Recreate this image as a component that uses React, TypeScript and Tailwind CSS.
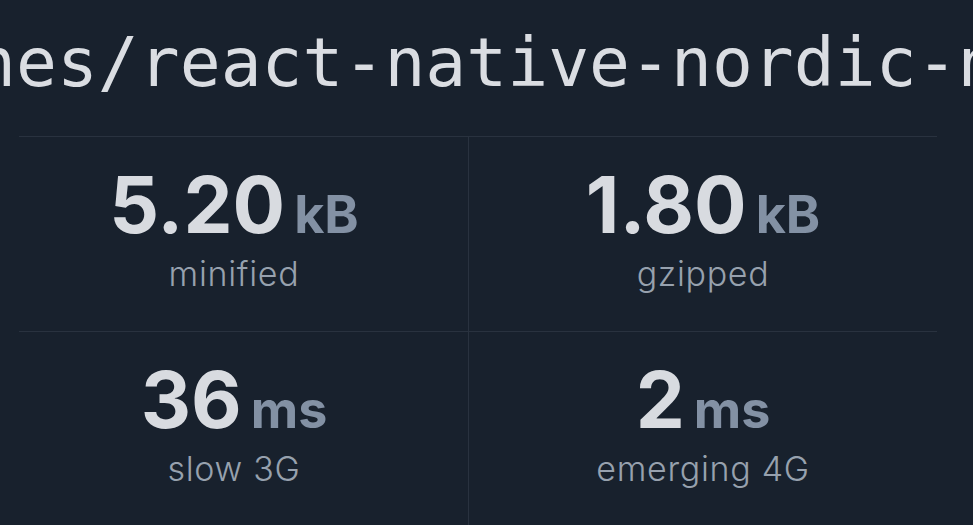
import React from "react";

interface Stat {
  value: string;
  unit: string;
  label: string;
}

const STATS: Stat[] = [
  { value: "5.20", unit: "kB", label: "minified" },
  { value: "1.80", unit: "kB", label: "gzipped" },
  { value: "36", unit: "ms", label: "slow 3G" },
  { value: "2", unit: "ms", label: "emerging 4G" },
];

function StatCell({ stat, left }: { stat: Stat; left: boolean }) {
  return (
    <div
      className={`h-[195px] border-t border-[#29323f] pt-[29px] flex flex-col items-center ${
        left ? "border-r pr-[19px]" : ""
      }`}
    >
      <div className="flex items-baseline gap-[9px] font-['Inter',sans-serif] font-bold leading-none">
        <span className="text-[78px] text-[#d8dbe0]">{stat.value}</span>
        <span className="text-[52px] text-[#8391a4]">{stat.unit}</span>
      </div>
      <div className="mt-[13px] font-['Inter',sans-serif] font-light text-[34px] leading-none tracking-[0.02em] text-[#97a1ae]">
        {stat.label}
      </div>
    </div>
  );
}

export default function App() {
  return (
    <div className="h-[525px] w-[973px] overflow-hidden bg-[#18212d]">
      {/* Package name, overflowing both edges */}
      <div className="h-[136px] pt-[29px] ml-[-25px] whitespace-nowrap font-['DejaVu_Sans_Mono',monospace] text-[68px] leading-none text-[#dadde2]">
        nes/react-native-nordic-n
      </div>

      {/* Stats grid */}
      <div className="ml-[19px] grid grid-cols-[450px_468px]">
        {STATS.map((s, i) => (
          <StatCell key={s.label} stat={s} left={i % 2 === 0} />
        ))}
      </div>
    </div>
  );
}
